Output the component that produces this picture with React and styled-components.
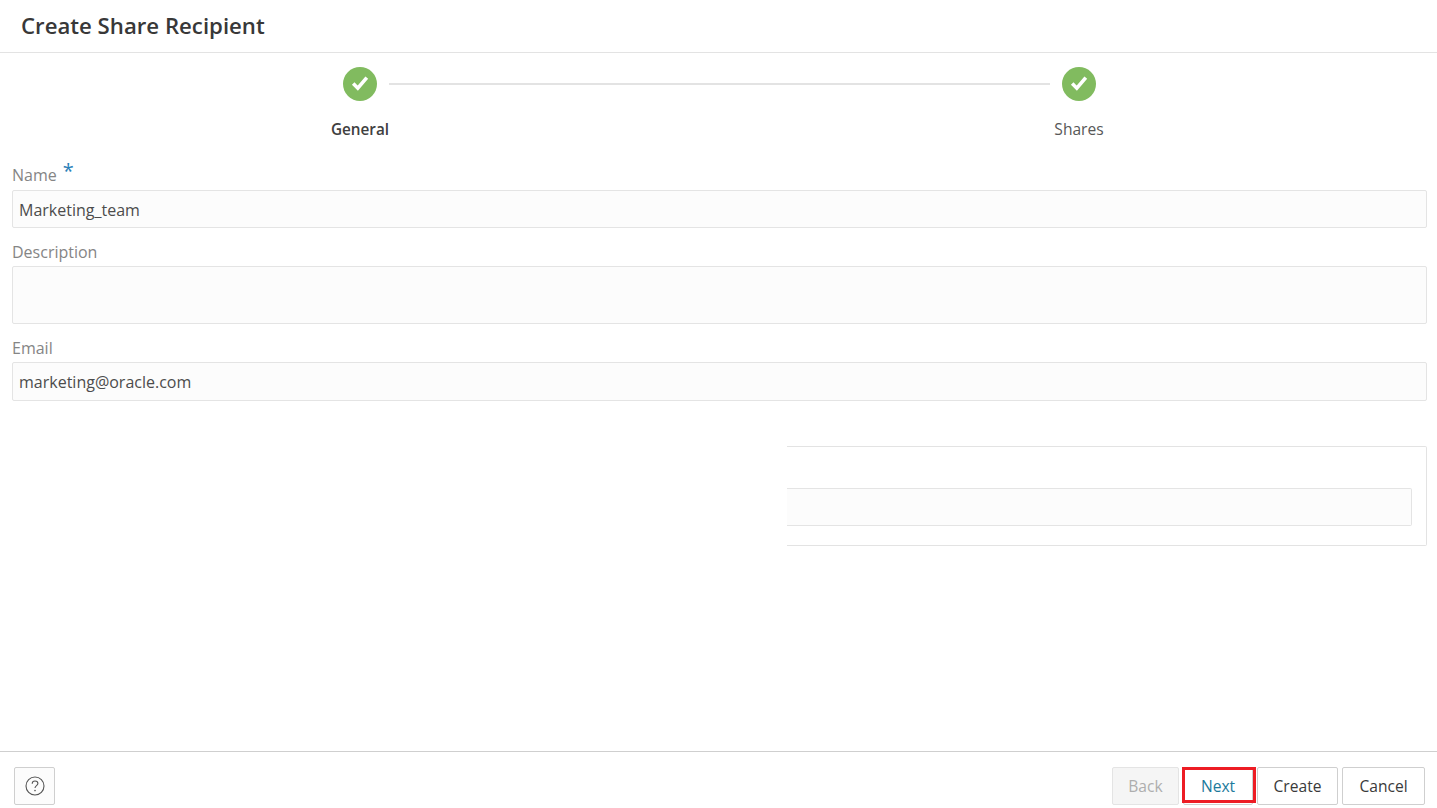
import React from "react";
import styled, { createGlobalStyle } from "styled-components";

const Global = createGlobalStyle`
  html, body { margin: 0; padding: 0; background: #fff; }
  body { font-family: "Open Sans", "Noto Sans", "Liberation Sans", sans-serif; color: #333; }
`;

const Page = styled.div`
  width: 1437px;
  height: 808px;
  display: flex;
  flex-direction: column;
  overflow: hidden;
`;

const Header = styled.header`
  height: 52px;
  flex: none;
  box-sizing: content-box;
  border-bottom: 1px solid #e3e3e3;
  padding-left: 21px;
  display: flex;
  align-items: center;
`;

const Title = styled.h1`
  margin: 0 0 2px;
  font-size: 22.2px;
  font-weight: 600;
  color: #383838;
`;

const Main = styled.main`
  flex: 1;
  padding: 0 10px 0 12px;
`;

const Train = styled.ol`
  list-style: none;
  margin: 0 0 0 308px;
  padding: 14px 0 0;
  height: 106px;
  box-sizing: border-box;
  display: grid;
  grid-template-columns: 80px 639px 80px;
  width: 799px;
`;

const Stop = styled.li`
  display: flex;
  flex-direction: column;
  align-items: center;
`;

const Badge = styled.span`
  width: 34px;
  height: 34px;
  border-radius: 50%;
  background: #81bb5f;
  display: flex;
  align-items: center;
  justify-content: center;
`;

const StopLabel = styled.span`
  margin-top: 19px;
  font-size: ${(p) => (p.$active ? "15.3px" : "15.6px")};
  line-height: 19px;
  white-space: nowrap;
  color: ${(p) => (p.$active ? "#404040" : "#585858")};
  font-weight: ${(p) => (p.$active ? 600 : 400)};
`;

const Connector = styled.li`
  height: 2px;
  background: #e3e3e3;
  margin: 16px 0 0 -11px;
  width: 661px;
`;

const Field = styled.div`
  display: flex;
  flex-direction: column;
`;

const Label = styled.label`
  font-size: 16px;
  line-height: 20px;
  color: #858585;
  height: ${(p) => p.$h}px;
  display: flex;
  align-items: flex-end;
  padding-bottom: ${(p) => p.$gap}px;
  box-sizing: border-box;
`;

const Req = styled.span`
  color: #2a7fb8;
  font-size: 20px;
  line-height: 20px;
  margin-left: 6px;
  position: relative;
  top: -4px;
  height: 20px;
`;

const Input = styled.div`
  height: ${(p) => p.$h}px;
  box-sizing: border-box;
  border: 1px solid #e4e4e4;
  border-radius: 2px;
  background: #fcfcfc;
  padding: ${(p) => (p.$nudge ? "1px" : "0")} 6px 0;
  display: flex;
  align-items: center;
  font-size: 16px;
  color: #4c4c4c;
`;

const Panel = styled.section`
  margin: 45px 0 0 775px;
  height: 100px;
  box-sizing: border-box;
  border: 1px solid #e3e3e3;
  border-left: none;
  border-radius: 0 2px 2px 0;
  padding: 41px 14px 0 0;
`;

const PanelInput = styled.div`
  height: 38px;
  box-sizing: border-box;
  border: 1px solid #e4e4e4;
  border-left: none;
  border-radius: 0 2px 2px 0;
  background: #fcfcfc;
`;

const Footer = styled.footer`
  height: 57px;
  box-sizing: border-box;
  flex: none;
  border-top: 1px solid #cfcfcf;
  padding: 15px 12px 0 14px;
  display: flex;
  align-items: flex-start;
  justify-content: space-between;
`;

const Actions = styled.div`
  display: flex;
  gap: 4px;
`;

const Button = styled.button`
  position: relative;
  height: 38px;
  width: ${(p) => p.$w}px;
  box-sizing: border-box;
  border: 1px solid ${(p) => (p.$disabled ? "#e4e4e4" : "#cfcfcf")};
  border-radius: 2px;
  background: ${(p) => (p.$disabled ? "#f5f5f5" : "#fff")};
  color: ${(p) => (p.$disabled ? "#aeaeae" : p.$primary ? "#1d7a9c" : "#3a3a3a")};
  font-family: inherit;
  font-size: 15.6px;
  padding: 0;
  display: flex;
  align-items: center;
  justify-content: center;
`;

const HelpButton = styled(Button)`
  background: #fcfcfc;
`;

const Highlight = styled.span`
  position: absolute;
  left: -2px;
  top: -1px;
  width: 74px;
  height: 36px;
  box-sizing: border-box;
  border: 3px solid #ed1c24;
`;

const Check = () => (
  <svg width="18" height="16" viewBox="0 0 18 16" aria-hidden="true">
    <path d="M2.2 7.6 L6.8 12.2 L15.8 1.6" fill="none" stroke="#fff" strokeWidth="3.6" />
  </svg>
);

const Help = () => (
  <svg width="20" height="20" viewBox="0 0 20 20" aria-hidden="true" fill="none" stroke="#555">
    <circle cx="10" cy="10" r="9" strokeWidth="1.1" />
    <path d="M7.2 7.8 C7.2 5.9 8.5 5 10 5 C11.7 5 12.9 6 12.9 7.5 C12.9 9.6 10 9.6 10 12" strokeWidth="1.1" />
    <circle cx="10" cy="14.6" r="0.8" fill="#555" stroke="none" />
  </svg>
);

export default function App() {
  return (
    <Page>
      <Global />
      <Header>
        <Title>Create Share Recipient</Title>
      </Header>
      <Main>
        <Train>
          <Stop>
            <Badge><Check /></Badge>
            <StopLabel $active>General</StopLabel>
          </Stop>
          <Connector />
          <Stop>
            <Badge><Check /></Badge>
            <StopLabel>Shares</StopLabel>
          </Stop>
        </Train>
        <Field>
          <Label $h={31} $gap={5}>Name<Req>*</Req></Label>
          <Input $h={38} $nudge>Marketing_team</Input>
        </Field>
        <Field>
          <Label $h={38} $gap={4}>Description</Label>
          <Input $h={58} />
        </Field>
        <Field>
          <Label $h={38} $gap={4}>Email</Label>
          <Input $h={39}>marketing@oracle.com</Input>
        </Field>
        <Panel>
          <PanelInput />
        </Panel>
      </Main>
      <Footer>
        <HelpButton $w={41} aria-label="Help"><Help /></HelpButton>
        <Actions>
          <Button $w={67} $disabled>Back</Button>
          <Button $w={70} $primary>Next<Highlight /></Button>
          <Button $w={81}>Create</Button>
          <Button $w={83}>Cancel</Button>
        </Actions>
      </Footer>
    </Page>
  );
}
